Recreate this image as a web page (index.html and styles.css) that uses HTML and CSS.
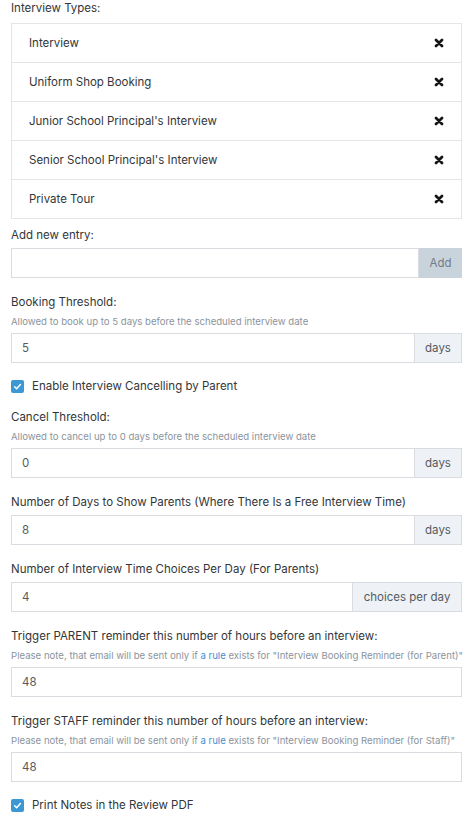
FILE: index.html
```html
<!DOCTYPE html>
<html lang="en">
<head>
<meta charset="utf-8">
<title>Interview Settings</title>
<link rel="stylesheet" href="styles.css">
</head>
<body>
<form class="settings">
  <div class="label label-first">Interview Types:</div>
  <ul class="type-list">
    <li class="type-row"><span>Interview</span><svg class="remove" viewBox="0 0 10 10"><path d="M2 2 L8 8 M8 2 L2 8"/></svg></li>
    <li class="type-row"><span>Uniform Shop Booking</span><svg class="remove" viewBox="0 0 10 10"><path d="M2 2 L8 8 M8 2 L2 8"/></svg></li>
    <li class="type-row"><span>Junior School Principal's Interview</span><svg class="remove" viewBox="0 0 10 10"><path d="M2 2 L8 8 M8 2 L2 8"/></svg></li>
    <li class="type-row"><span>Senior School Principal's Interview</span><svg class="remove" viewBox="0 0 10 10"><path d="M2 2 L8 8 M8 2 L2 8"/></svg></li>
    <li class="type-row"><span>Private Tour</span><svg class="remove" viewBox="0 0 10 10"><path d="M2 2 L8 8 M8 2 L2 8"/></svg></li>
  </ul>

  <div class="group">
    <div class="label">Add new entry:</div>
    <div class="input-group">
      <div class="input"></div>
      <div class="btn-add">Add</div>
    </div>
  </div>

  <div class="group">
    <div class="label">Booking Threshold:</div>
    <div class="help">Allowed to book up to 5 days before the scheduled interview date</div>
    <div class="input-group">
      <div class="input">5</div>
      <div class="addon">days</div>
    </div>
  </div>

  <div class="check-row">
    <span class="checkbox"><svg viewBox="0 0 13 13"><path d="M3.6 6.8 L5.6 8.7 L9.4 4.6"/></svg></span>
    <span>Enable Interview Cancelling by Parent</span>
  </div>

  <div class="group">
    <div class="label">Cancel Threshold:</div>
    <div class="help">Allowed to cancel up to 0 days before the scheduled interview date</div>
    <div class="input-group">
      <div class="input">0</div>
      <div class="addon">days</div>
    </div>
  </div>

  <div class="group">
    <div class="label">Number of Days to Show Parents (Where There Is a Free Interview Time)</div>
    <div class="input-group">
      <div class="input">8</div>
      <div class="addon">days</div>
    </div>
  </div>

  <div class="group">
    <div class="label">Number of Interview Time Choices Per Day (For Parents)</div>
    <div class="input-group">
      <div class="input">4</div>
      <div class="addon addon-wide">choices per day</div>
    </div>
  </div>

  <div class="group">
    <div class="label">Trigger PARENT reminder this number of hours before an interview:</div>
    <div class="help">Please note, that email will be sent only if <a class="link">a rule</a> exists for "Interview Booking Reminder (for Parent)"</div>
    <div class="input solo">48</div>
  </div>

  <div class="group">
    <div class="label">Trigger STAFF reminder this number of hours before an interview:</div>
    <div class="help">Please note, that email will be sent only if <a class="link">a rule</a> exists for "Interview Booking Reminder (for Staff)"</div>
    <div class="input solo">48</div>
  </div>

  <div class="check-row">
    <span class="checkbox"><svg viewBox="0 0 13 13"><path d="M3.6 6.8 L5.6 8.7 L9.4 4.6"/></svg></span>
    <span>Print Notes in the Review PDF</span>
  </div>
</form>
</body>
</html>
```

FILE: styles.css
```css
html, body {
  margin: 0;
  padding: 0;
  background: #ffffff;
}

body {
  font-family: Inter, "Noto Sans", "Liberation Sans", sans-serif;
  font-size: 11.5px;
  color: #333639;
  overflow: hidden;
}

.settings {
  padding: 0 12px 0 11px;
  display: flex;
  flex-direction: column;
}

.label {
  line-height: 18px;
  margin-bottom: 4px;
  white-space: nowrap;
}

.label-first {
  margin-top: -1px;
  margin-bottom: 6px;
}

.type-list {
  list-style: none;
  margin: 0 0 7px 0;
  padding: 0;
  border: 1px solid #e3e6e9;
}

.type-row {
  height: 38px;
  display: flex;
  align-items: center;
  justify-content: space-between;
  padding: 0 17px 0 17px;
}

.type-row + .type-row {
  border-top: 1px solid #e3e6e9;
}

.remove {
  width: 10px;
  height: 10px;
  fill: none;
  stroke: #151515;
  stroke-width: 2.8;
  stroke-linecap: round;
}

.group {
  margin-bottom: 15px;
  display: flex;
  flex-direction: column;
}

.help {
  font-size: 9.6px;
  line-height: 14px;
  color: #8b949d;
  margin-bottom: 4px;
  white-space: nowrap;
}

.link {
  color: #3b8fd2;
  text-decoration: none;
}

.input-group {
  display: flex;
  height: 30px;
}

.input {
  flex: 1;
  height: 30px;
  box-sizing: border-box;
  border: 1px solid #d9dde1;
  padding: 0 10px;
  display: flex;
  align-items: center;
  color: #555a60;
  font-size: 11.5px;
}

.input.solo {
  flex: none;
}

.addon {
  width: 47px;
  box-sizing: border-box;
  border: 1px solid #d9dde1;
  border-left: none;
  background: #eef1f5;
  color: #555b62;
  display: flex;
  align-items: center;
  justify-content: center;
}

.addon-wide {
  width: 109px;
}

.btn-add {
  width: 43px;
  background: #c9d3db;
  color: #6f7c89;
  display: flex;
  align-items: center;
  justify-content: center;
}

.check-row {
  display: flex;
  align-items: center;
  gap: 8px;
  height: 16px;
  margin-bottom: 14px;
}

.checkbox {
  width: 13px;
  height: 13px;
  border-radius: 2px;
  background: #3c97d5;
  display: flex;
}

.checkbox svg {
  width: 13px;
  height: 13px;
  fill: none;
  stroke: #ffffff;
  stroke-width: 1.5;
  stroke-linecap: round;
  stroke-linejoin: round;
}
```
